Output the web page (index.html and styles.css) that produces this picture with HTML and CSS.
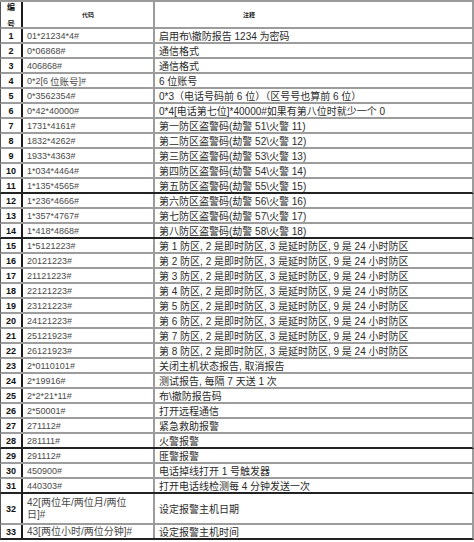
FILE: index.html
```html
<!DOCTYPE html>
<html lang="zh">
<head>
<meta charset="utf-8">
<link rel="stylesheet" href="styles.css">
</head>
<body>
<div class="sheet">
  <div class="row hdr">
    <div class="num"><span>编</span><span>号</span></div>
    <div class="code">代码</div>
    <div class="note">注释</div>
  </div>
  <div class="row"><div class="num">1</div><div class="code">01*21234*4#</div><div class="note">启用布\撤防报告 1234 为密码</div></div>
  <div class="row"><div class="num">2</div><div class="code">0*06868#</div><div class="note">通信格式</div></div>
  <div class="row"><div class="num">3</div><div class="code">406868#</div><div class="note">通信格式</div></div>
  <div class="row"><div class="num">4</div><div class="code">0*2[6 <span class="cjk">位账号</span>]#</div><div class="note">6 位账号</div></div>
  <div class="row"><div class="num">5</div><div class="code">0*3562354#</div><div class="note">0*3（电话号码前 6 位）（区号号也算前 6 位）</div></div>
  <div class="row"><div class="num">6</div><div class="code">0*42*40000#</div><div class="note">0*4[电话第七位]*40000#如果有第八位时就少一个 0</div></div>
  <div class="row"><div class="num">7</div><div class="code">1731*4161#</div><div class="note">第一防区盗警码(劫警 51\火警 11)</div></div>
  <div class="row"><div class="num">8</div><div class="code">1832*4262#</div><div class="note">第二防区盗警码(劫警 52\火警 12)</div></div>
  <div class="row"><div class="num">9</div><div class="code">1933*4363#</div><div class="note">第三防区盗警码(劫警 53\火警 13)</div></div>
  <div class="row"><div class="num">10</div><div class="code">1*034*4464#</div><div class="note">第四防区盗警码(劫警 54\火警 14)</div></div>
  <div class="row dark"><div class="num">11</div><div class="code">1*135*4565#</div><div class="note">第五防区盗警码(劫警 55\火警 15)</div></div>
  <div class="row"><div class="num">12</div><div class="code">1*236*4666#</div><div class="note">第六防区盗警码(劫警 56\火警 16)</div></div>
  <div class="row"><div class="num">13</div><div class="code">1*357*4767#</div><div class="note">第七防区盗警码(劫警 57\火警 17)</div></div>
  <div class="row dark"><div class="num">14</div><div class="code">1*418*4868#</div><div class="note">第八防区盗警码(劫警 58\火警 18)</div></div>
  <div class="row"><div class="num">15</div><div class="code">1*5121223#</div><div class="note">第 1 防区, 2 是即时防区, 3 是延时防区, 9 是 24 小时防区</div></div>
  <div class="row"><div class="num">16</div><div class="code">20121223#</div><div class="note">第 2 防区, 2 是即时防区, 3 是延时防区, 9 是 24 小时防区</div></div>
  <div class="row"><div class="num">17</div><div class="code">21121223#</div><div class="note">第 3 防区, 2 是即时防区, 3 是延时防区, 9 是 24 小时防区</div></div>
  <div class="row"><div class="num">18</div><div class="code">22121223#</div><div class="note">第 4 防区, 2 是即时防区, 3 是延时防区, 9 是 24 小时防区</div></div>
  <div class="row"><div class="num">19</div><div class="code">23121223#</div><div class="note">第 5 防区, 2 是即时防区, 3 是延时防区, 9 是 24 小时防区</div></div>
  <div class="row"><div class="num">20</div><div class="code">24121223#</div><div class="note">第 6 防区, 2 是即时防区, 3 是延时防区, 9 是 24 小时防区</div></div>
  <div class="row"><div class="num">21</div><div class="code">25121923#</div><div class="note">第 7 防区, 2 是即时防区, 3 是延时防区, 9 是 24 小时防区</div></div>
  <div class="row"><div class="num">22</div><div class="code">26121923#</div><div class="note">第 8 防区, 2 是即时防区, 3 是延时防区, 9 是 24 小时防区</div></div>
  <div class="row"><div class="num">23</div><div class="code">2*0110101#</div><div class="note">关闭主机状态报告, 取消报告</div></div>
  <div class="row"><div class="num">24</div><div class="code">2*19916#</div><div class="note">测试报告, 每隔 7 天送 1 次</div></div>
  <div class="row"><div class="num">25</div><div class="code">2*2*21*11#</div><div class="note">布\撤防报告码</div></div>
  <div class="row"><div class="num">26</div><div class="code">2*50001#</div><div class="note">打开远程通信</div></div>
  <div class="row"><div class="num">27</div><div class="code">271112#</div><div class="note">紧急救助报警</div></div>
  <div class="row dark"><div class="num">28</div><div class="code">281111#</div><div class="note">火警报警</div></div>
  <div class="row"><div class="num">29</div><div class="code">291112#</div><div class="note">匪警报警</div></div>
  <div class="row"><div class="num">30</div><div class="code">450900#</div><div class="note">电话掉线打开 1 号触发器</div></div>
  <div class="row dark"><div class="num">31</div><div class="code">440303#</div><div class="note">打开电话线检测每 4 分钟发送一次</div></div>
  <div class="row tall"><div class="num">32</div><div class="code wide">42[两位年/两位月/两位<br>日]#</div><div class="note">设定报警主机日期</div></div>
  <div class="row dark last"><div class="num">33</div><div class="code wide">43[两位小时/两位分钟]#</div><div class="note">设定报警主机时间</div></div>
</div>
</body>
</html>
```

FILE: styles.css
```css
html, body {
  margin: 0;
  padding: 0;
  background: #ffffff;
}

.sheet {
  width: 474px;
  font-family: "Liberation Sans", "Noto Sans CJK SC", sans-serif;
  border-top: 2px solid #9a9a9a;
  box-sizing: border-box;
}

.row {
  display: grid;
  grid-template-columns: 22px 132px 1fr;
  height: 15px;
  box-sizing: border-box;
  border-bottom: 2px solid #9c9c9c;
  border-left: 1px solid #555;
  border-right: 2px solid #9c9c9c;
}

.row.dark {
  border-bottom-color: #222;
}

.row.hdr {
  height: 27px;
}

.row.tall {
  height: 31px;
}

.row.last {
  height: 15px;
}

.num,
.code,
.note {
  display: flex;
  align-items: center;
  overflow: hidden;
  white-space: nowrap;
}

.num {
  justify-content: center;
  border-right: 2px solid #1a1a1a;
  font-weight: bold;
  font-size: 9px;
  color: #111;
}

.code {
  border-right: 2px solid #9c9c9c;
  padding-left: 4px;
  font-size: 9px;
  color: #4a4a4a;
}

.code .cjk {
  font-size: 9.5px;
  padding-left: 2px;
}

.code.wide {
  font-size: 10px;
  line-height: 12px;
}

.tall .code {
  white-space: normal;
}

.note {
  padding-left: 4px;
  font-size: 10px;
  color: #2a2a2a;
}

.hdr .num {
  flex-direction: column;
  justify-content: center;
  gap: 6px;
  font-size: 8px;
}

.hdr .code {
  justify-content: center;
  padding-left: 0;
  font-weight: bold;
  font-size: 6px;
  color: #222;
}

.hdr .note {
  padding-left: 88px;
  font-weight: bold;
  font-size: 6px;
  color: #222;
}
```
